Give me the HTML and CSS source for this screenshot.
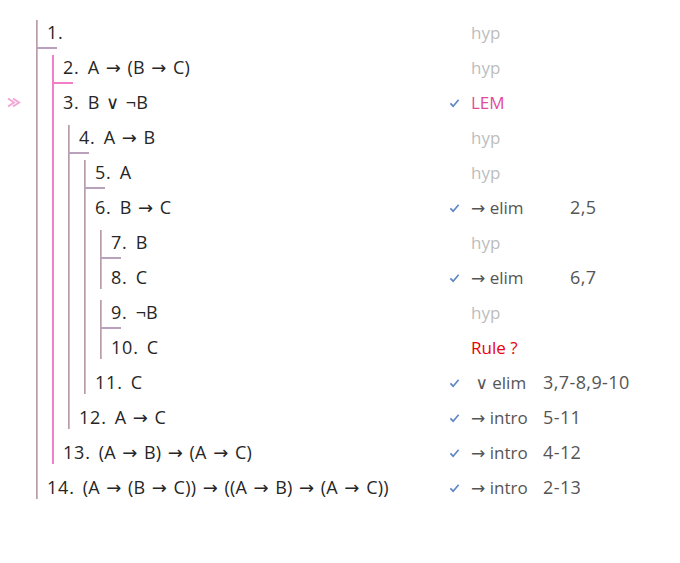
FILE: index.html
```html
<!DOCTYPE html>
<html>
<head>
<meta charset="utf-8">
<link rel="stylesheet" href="styles.css">
</head>
<body>
<div class="page">
  <div class="proof">
    <svg class="marker" width="14" height="11" viewBox="0 0 14 11"><path d="M1 1.5 L7 5.5 L1 9.5 M6 1.5 L12 5.5 L6 9.5" fill="none" stroke="#f4a6d4" stroke-width="2"/></svg>
    <div class="sub">
      <div class="row hyp"><span class="num">1.</span></div>
      <div class="sub pink">
        <div class="row hyp pinkbar"><span class="num">2.</span>A → (B → C)</div>
        <div class="row"><span class="num">3.</span>B ∨ ¬B</div>
        <div class="sub">
          <div class="row hyp"><span class="num">4.</span>A → B</div>
          <div class="sub">
            <div class="row hyp"><span class="num">5.</span>A</div>
            <div class="row"><span class="num">6.</span>B → C</div>
            <div class="sub">
              <div class="row hyp"><span class="num">7.</span>B</div>
              <div class="row"><span class="num">8.</span>C</div>
            </div>
            <div class="sub">
              <div class="row hyp"><span class="num">9.</span>¬B</div>
              <div class="row"><span class="num">10.</span>C</div>
            </div>
            <div class="row"><span class="num">11.</span>C</div>
          </div>
          <div class="row"><span class="num">12.</span>A → C</div>
        </div>
        <div class="row"><span class="num">13.</span>(A → B) → (A → C)</div>
      </div>
      <div class="row"><span class="num">14.</span>(A → (B → C)) → ((A → B) → (A → C))</div>
    </div>
  </div>
  <div class="just">
    <div class="jrow"><span class="chk"></span><span class="rule gray">hyp</span></div>
    <div class="jrow"><span class="chk"></span><span class="rule gray">hyp</span></div>
    <div class="jrow"><span class="chk"><svg viewBox="0 0 12 10" width="11" height="10"><path d="M1.5 5.5 L4.5 8.5 L10.5 1.5" fill="none" stroke="#5d85c4" stroke-width="1.8"/></svg></span><span class="rule lem">LEM</span></div>
    <div class="jrow"><span class="chk"></span><span class="rule gray">hyp</span></div>
    <div class="jrow"><span class="chk"></span><span class="rule gray">hyp</span></div>
    <div class="jrow"><span class="chk"><svg viewBox="0 0 12 10" width="11" height="10"><path d="M1.5 5.5 L4.5 8.5 L10.5 1.5" fill="none" stroke="#5d85c4" stroke-width="1.8"/></svg></span><span class="rule">→ elim</span><span class="refs shift">2,5</span></div>
    <div class="jrow"><span class="chk"></span><span class="rule gray">hyp</span></div>
    <div class="jrow"><span class="chk"><svg viewBox="0 0 12 10" width="11" height="10"><path d="M1.5 5.5 L4.5 8.5 L10.5 1.5" fill="none" stroke="#5d85c4" stroke-width="1.8"/></svg></span><span class="rule">→ elim</span><span class="refs shift">6,7</span></div>
    <div class="jrow"><span class="chk"></span><span class="rule gray">hyp</span></div>
    <div class="jrow"><span class="chk"></span><span class="rule red">Rule ?</span></div>
    <div class="jrow"><span class="chk"><svg viewBox="0 0 12 10" width="11" height="10"><path d="M1.5 5.5 L4.5 8.5 L10.5 1.5" fill="none" stroke="#5d85c4" stroke-width="1.8"/></svg></span><span class="rule">&nbsp;∨ elim</span><span class="refs">3,7-8,9-10</span></div>
    <div class="jrow"><span class="chk"><svg viewBox="0 0 12 10" width="11" height="10"><path d="M1.5 5.5 L4.5 8.5 L10.5 1.5" fill="none" stroke="#5d85c4" stroke-width="1.8"/></svg></span><span class="rule">→ intro</span><span class="refs">5-11</span></div>
    <div class="jrow"><span class="chk"><svg viewBox="0 0 12 10" width="11" height="10"><path d="M1.5 5.5 L4.5 8.5 L10.5 1.5" fill="none" stroke="#5d85c4" stroke-width="1.8"/></svg></span><span class="rule">→ intro</span><span class="refs">4-12</span></div>
    <div class="jrow"><span class="chk"><svg viewBox="0 0 12 10" width="11" height="10"><path d="M1.5 5.5 L4.5 8.5 L10.5 1.5" fill="none" stroke="#5d85c4" stroke-width="1.8"/></svg></span><span class="rule">→ intro</span><span class="refs">2-13</span></div>
  </div>
</div>
</body>
</html>
```
FILE: styles.css
```css
html, body {
  margin: 0;
  background: #ffffff;
}
body {
  font-family: "Open Sans", "DejaVu Sans", sans-serif;
  font-size: 17px;
  color: #222222;
}
.page {
  display: flex;
  padding: 15px 0 0 36px;
}
.proof {
  width: 412px;
  flex: none;
}
.marker {
  position: absolute;
  left: 7px;
  top: 97px;
}
.sub {
  position: relative;
}
.sub .sub {
  margin-left: 16px;
}
.sub::before {
  content: "";
  position: absolute;
  left: 0;
  top: 5px;
  bottom: 6px;
  width: 2px;
  background: linear-gradient(to right, #b99dab 50%, #abc6e4 50%);
}
.sub.pink::before {
  background: #f27fc6;
}
.row {
  position: relative;
  height: 35px;
  line-height: 35px;
  padding-left: 11px;
  white-space: nowrap;
  font-size: 18px;
  word-spacing: 1.6px;
  letter-spacing: 0.2px;
  color: #262626;
}
.num {
  display: inline-block;
  margin-right: 8px;
  letter-spacing: 0.8px;
}
.hyp::after {
  content: "";
  position: absolute;
  left: 0;
  bottom: 1px;
  width: 21px;
  height: 2px;
  background: #b9a0bb;
}
.hyp.pinkbar::after {
  background: #f27fc6;
}
.just {
  flex: none;
}
.jrow {
  display: flex;
  align-items: center;
  height: 35px;
  line-height: 35px;
  white-space: nowrap;
}
.chk {
  width: 23px;
  display: flex;
  align-items: center;
  padding-left: 1px;
  box-sizing: border-box;
}
.rule {
  width: 72px;
  color: #555555;
}
.rule.gray {
  color: #bdbdbd;
}
.rule.lem {
  color: #e24a9c;
}
.rule.red {
  color: #e8000c;
}
.refs {
  color: #555555;
  font-size: 18px;
  letter-spacing: 0.4px;
}
.refs.shift {
  padding-left: 27px;
}
```
